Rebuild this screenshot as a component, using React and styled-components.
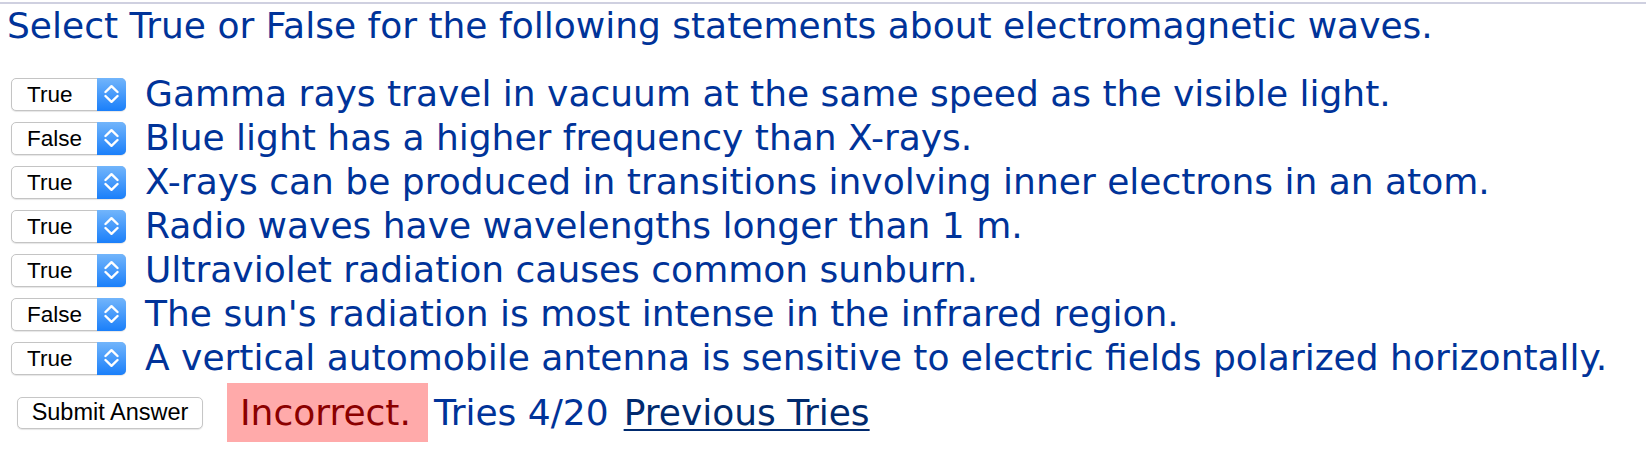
import React from "react";
import styled, { createGlobalStyle } from "styled-components";

const Global = createGlobalStyle`
  html, body { margin: 0; padding: 0; background: #fff; }
  body { font-family: "DejaVu Sans", Verdana, sans-serif; }
`;

const Page = styled.div`
  border-top: 2px solid #cfd0e0;
  margin-top: 2px;
  padding: 4px 0 0 7px;
  color: #003399;
`;

const Heading = styled.p`
  margin: 0 0 28px 0;
  font-size: 36px;
  line-height: 36px;
`;

const List = styled.div`
  display: flex;
  flex-direction: column;
`;

const Row = styled.div`
  display: flex;
  align-items: center;
  gap: 19px;
  height: 44px;
  padding-left: 4px;
`;

const Statement = styled.span`
  font-size: 36px;
  line-height: 40px;
  white-space: nowrap;
`;

const SelectWrap = styled.span`
  position: relative;
  display: inline-block;
  width: 115px;
  height: 33px;
  flex: none;
`;

const NativeSelect = styled.select`
  appearance: none;
  -webkit-appearance: none;
  width: 100%;
  height: 100%;
  box-sizing: border-box;
  margin: 0;
  padding: 0 34px 0 15px;
  border: 1px solid #c4c4c4;
  border-radius: 5px;
  background: #fff;
  box-shadow: 0 1px 1px rgba(0, 0, 0, 0.1);
  font-family: "Liberation Sans", Arial, sans-serif;
  font-size: 22.5px;
  color: #000;
  outline: none;
`;

const Arrow = styled.span`
  position: absolute;
  top: 0;
  right: 0;
  width: 29px;
  height: 100%;
  border-radius: 0 5px 5px 0;
  background: linear-gradient(#72b5fb, #1a7ffa);
  display: flex;
  align-items: center;
  justify-content: center;
  pointer-events: none;
`;

const Chevrons = () => (
  <svg width="15" height="20" viewBox="0 0 15 20" fill="none">
    <path d="M1.5 8 L7.5 2.2 L13.5 8" stroke="#fff" strokeWidth="2.4" strokeLinecap="round" strokeLinejoin="round" />
    <path d="M1.5 12 L7.5 17.8 L13.5 12" stroke="#fff" strokeWidth="2.4" strokeLinecap="round" strokeLinejoin="round" />
  </svg>
);

const TFSelect = ({ value }) => (
  <SelectWrap>
    <NativeSelect defaultValue={value}>
      <option value="True">True</option>
      <option value="False">False</option>
    </NativeSelect>
    <Arrow>
      <Chevrons />
    </Arrow>
  </SelectWrap>
);

const Footer = styled.div`
  display: flex;
  align-items: center;
  margin-top: 3px;
  font-size: 36px;
`;

const SubmitButton = styled.button`
  margin: 0 24px 0 10px;
  width: 186px;
  height: 32px;
  border: 1px solid #c6c6c6;
  border-radius: 5px;
  background: #fff;
  box-shadow: 0 1px 1px rgba(0, 0, 0, 0.1);
  font-family: "Liberation Sans", Arial, sans-serif;
  font-size: 23.5px;
  color: #000;
  padding: 0;
`;

const Incorrect = styled.span`
  background: #ffaaaa;
  color: #8b0000;
  padding: 12px 17px 12px 13px;
  line-height: 35px;
`;

const Tries = styled.span`
  margin-left: 6px;
`;

const PrevLink = styled.a`
  margin-left: 15px;
  color: #002a6e;
  text-decoration: underline;
  text-decoration-thickness: 2px;
  text-underline-offset: 4px;
`;

const rows = [
  ["True", "Gamma rays travel in vacuum at the same speed as the visible light."],
  ["False", "Blue light has a higher frequency than X-rays."],
  ["True", "X-rays can be produced in transitions involving inner electrons in an atom."],
  ["True", "Radio waves have wavelengths longer than 1 m."],
  ["True", "Ultraviolet radiation causes common sunburn."],
  ["False", "The sun's radiation is most intense in the infrared region."],
  ["True", "A vertical automobile antenna is sensitive to electric fields polarized horizontally."],
];

export default function App() {
  return (
    <>
      <Global />
      <Page>
        <Heading>Select True or False for the following statements about electromagnetic waves.</Heading>
        <List>
          {rows.map(([v, t], i) => (
            <Row key={i}>
              <TFSelect value={v} />
              <Statement>{t}</Statement>
            </Row>
          ))}
        </List>
        <Footer>
          <SubmitButton>Submit Answer</SubmitButton>
          <Incorrect>Incorrect.</Incorrect>
          <Tries>Tries 4/20</Tries>
          <PrevLink href="#">Previous Tries</PrevLink>
        </Footer>
      </Page>
    </>
  );
}
